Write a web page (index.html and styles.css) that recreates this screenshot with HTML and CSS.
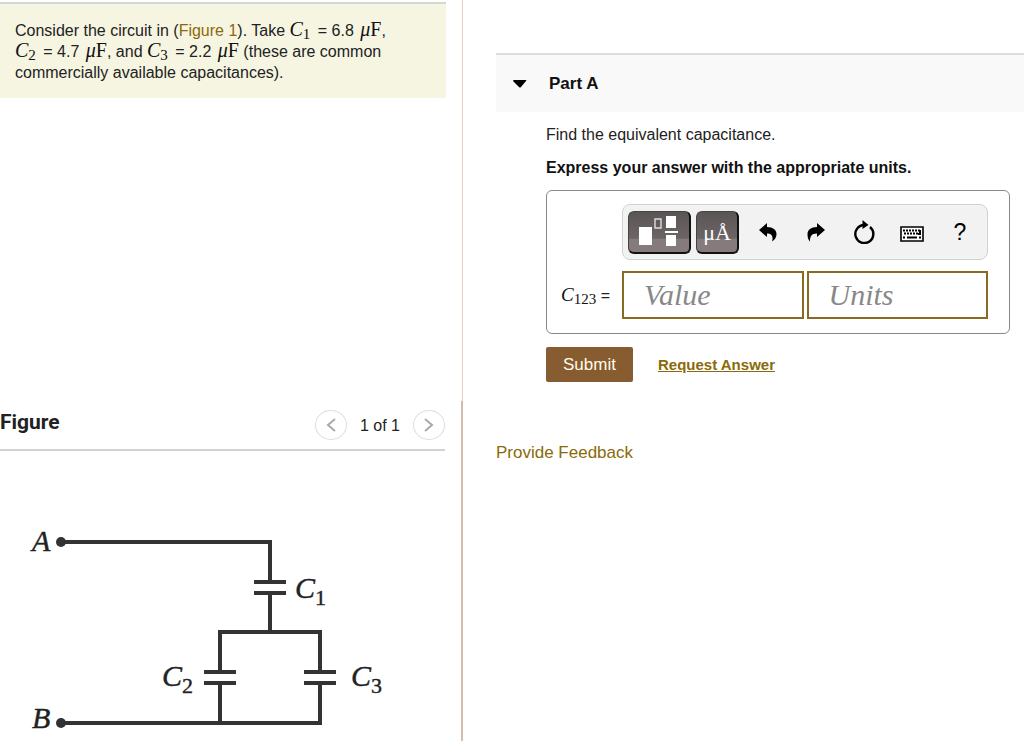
FILE: index.html
```
<!doctype html>
<html lang="en">
<head>
    <meta charset="UTF-8">
    <title>Equivalent capacitance</title>
    <link rel="stylesheet" href="styles.css">
</head>
<body>
    <div class="page">
        <div class="left">
            <div class="intro">
                <p class="problem">Consider the circuit in (<a href="#figure">Figure 1</a>). Take <span class="math"><i>C</i><sub>1</sub></span> = 6.8 <span class="math unit"><i>μ</i>F</span>, <span class="math"><i>C</i><sub>2</sub></span> = 4.7 <span class="math unit"><i>μ</i>F</span>, and <span class="math"><i>C</i><sub>3</sub></span> = 2.2 <span class="math unit"><i>μ</i>F</span> (these are common commercially available capacitances).</p>
            </div>
            <div class="figure" id="figure">
                <div class="figure-head">
                    <h2>Figure</h2>
                    <div class="pager">
                        <button type="button" aria-label="Previous figure"><svg width="12" height="16" viewBox="0 0 12 16"><path d="M10 2L3 8l7 6"/></svg></button>
                        <span>1 of 1</span>
                        <button type="button" aria-label="Next figure"><svg width="12" height="16" viewBox="0 0 12 16"><path d="M2 2l7 6-7 6"/></svg></button>
                    </div>
                </div>
                <svg class="circuit" viewBox="0 0 445 290">
                    <!-- wires -->
                    <g class="wire">
                        <path d="M61 91H270V131"/>
                        <path d="M270 142V181"/>
                        <path d="M220 221V181H320V221"/>
                        <path d="M220 232V272"/>
                        <path d="M61 272H320V232"/>
                    </g>
                    <!-- capacitor plates -->
                    <path class="wire" d="M254 131h32M254 142h32M204 221h32M204 232h32M304 221h32M304 232h32"/>
                    <circle cx="61" cy="91" r="5"/>
                    <circle cx="61" cy="272" r="5"/>
                    <text x="32" y="100">A</text>
                    <text x="32" y="277">B</text>
                    <text x="295" y="147">C<tspan class="sub" dy="7">1</tspan></text>
                    <text x="162" y="235">C<tspan class="sub" dy="7">2</tspan></text>
                    <text x="351" y="235">C<tspan class="sub" dy="7">3</tspan></text>
                </svg>
            </div>
        </div>
        <div class="right">
            <div class="part-head">
                <svg width="14" height="8" viewBox="0 0 14 8"><path d="M0 1Q0 0 1 0H13Q14 0 13 1L8 7Q7 8 6 7Z"/></svg>
                <h2>Part A</h2>
            </div>
            <form class="part-body">
                <p>Find the equivalent capacitance.</p>
                <p class="bold">Express your answer with the appropriate units.</p>
                <div class="answer">
                    <div class="toolbar">
                        <button type="button" class="dark templates" aria-label="Templates">
                            <svg width="40" height="34" viewBox="0 0 40 34" fill="#fff">
                                <path d="M0 12h13v18H0zM27 1h10v12H27zM27 20h10v11H27zM26 16h13v2H26z"/>
                                <path d="M16 4h6v9h-6z" fill="none" stroke="#ddd" stroke-width="1.4"/>
                            </svg>
                        </button>
                        <button type="button" class="dark">μÅ</button>
                        <div class="tools">
                            <button type="button" aria-label="Undo"><svg width="20" height="20" viewBox="0 0 20 20"><path d="M1 8L9 1V5C15 5 18.500 8 18.500 12C18.500 15 17 18 14 19.500C15.500 15 14 11.500 9 11.500V15Z"/></svg></button>
                            <button type="button" aria-label="Redo"><svg width="20" height="20" viewBox="0 0 20 20"><path d="M19 8L11 1V5C5 5 1.500 8 1.500 12C1.500 15 2 18 4 19.500C4 15 5 11.500 11 11.500V15Z"/></svg></button>
                            <button type="button" aria-label="Reset"><svg width="22" height="24" viewBox="0 0 22 24"><path d="M17 7A9 9 0 1 1 11 5" fill="none" stroke="#000" stroke-width="2.400"/><path d="M9.500 0L15.500 5L9.500 9Z"/></svg></button>
                            <button type="button" aria-label="Keyboard"><svg width="26" height="20" viewBox="0 0 26 20"><path d="M2 5H24V19H2Z" fill="#fff" stroke="#000" stroke-width="1.600"/><path d="M4 8.500H22M5 11.500H20" fill="none" stroke="#000" stroke-width="2" stroke-dasharray="2 1"/><path d="M4 14.500h2v2H4zM8 14.500h10v2H8zM20 14.500h2v2h-2zM20 8h2v5h-3v-2h1z"/></svg></button>
                            <button type="button" class="help" aria-label="Help">?</button>
                        </div>
                    </div>
                    <label class="answer-label" for="value"><span class="math"><i>C</i><sub>123</sub></span> =</label>
                    <div class="fields">
                        <input type="text" id="value" placeholder="Value">
                        <input type="text" placeholder="Units" aria-label="Units">
                    </div>
                </div>
                <div class="actions">
                    <button type="submit">Submit</button>
                    <a href="#">Request Answer</a>
                </div>
            </form>
            <a class="feedback" href="#">Provide Feedback</a>
        </div>
    </div>
</body>
</html>
```

FILE: styles.css
```
* {
    margin: 0;
    padding: 0;
    box-sizing: border-box;
}
body{
    font: 16px/21px "Liberation Sans", Arial, sans-serif;
    color: #222;
    background: #fff;
}
a{
    color: #8a6a0a;
    text-decoration: none;
}
button{
    font-family: inherit;
    border: 0;
    cursor: pointer;
}
.page{
    display: grid;
    grid-template-columns: minmax(0, 463fr) minmax(0, 561fr);
    min-height: 100vh;
}

/* left column */
.left{
    display: flex;
    flex-direction: column;
}
.intro{
    flex: 1;
    padding: 2px 16px 0 0;
    border-right: 1px solid #e0cfc4;
}
.problem{
    padding: 16px 50px 15px 15px;
    border-top: 2px solid #d3d6d3;
    background: #f6f5e1;
}
.math{
    font-family: "Liberation Serif", "Times New Roman", serif;
    font-size: 19px;
    line-height: 16px;
    color: #111;
    white-space: nowrap;
}
.math sub{
    font-size: 15px;
    line-height: 0;
    vertical-align: -3px;
}
.problem .math{
    font-size: 20px;
}
.problem sub{
    margin-right: 3px;
}
.problem .unit{
    margin-left: 2px;
}
.figure{
    padding-right: 16px;
    border-right: 2px solid #d2bcab;
}
.figure-head{
    display: flex;
    justify-content: space-between;
    align-items: center;
    height: 50px;
    border-bottom: 2px solid #d2d2d2;
}
.figure-head h2{
    font: bold 21px/24px Roboto, sans-serif;
    padding-bottom: 7px;
}
.pager{
    display: flex;
    align-items: center;
    gap: 13px;
}
.pager button{
    display: flex;
    align-items: center;
    justify-content: center;
    width: 32px;
    height: 30px;
    border: 1px solid #ddd;
    border-radius: 50%;
    background: #fff;
}
.pager path{
    fill: none;
    stroke: #aaa;
    stroke-width: 2;
}
.circuit{
    display: block;
    width: 100%;
    fill: #333;
}
.circuit .wire{
    fill: none;
    stroke: #333;
    stroke-width: 4;
}
.circuit text{
    font: italic 30px "Liberation Serif", "Times New Roman", serif;
    fill: #222;
    stroke: #222;
    stroke-width: 0.4;
}
.circuit .sub{
    font-size: 22px;
    font-style: normal;
}

/* right column */
.right{
    padding: 53px 0 0 33px;
}
.part-head{
    display: flex;
    align-items: center;
    gap: 22px;
    height: 59px;
    padding-left: 17px;
    border-top: 2px solid #ddd;
    background: #f9f9f9;
}
.part-head h2{
    font-size: 17px;
    color: #111;
}
.part-body{
    padding: 12px 14px 0 50px;
}
.part-body p{
    margin-bottom: 12px;
}
.part-body .bold{
    font-weight: bold;
    color: #111;
}
.answer{
    display: grid;
    grid-template-columns: 61px minmax(0, 1fr);
    row-gap: 11px;
    align-items: center;
    padding: 13px 21px 14px 14px;
    border: 1px solid #888;
    border-radius: 6px;
}
.toolbar{
    grid-column: 2;
    display: flex;
    align-items: center;
    gap: 5px;
    height: 56px;
    padding: 0 3px 0 5px;
    border: 1px solid #d2d2d2;
    border-radius: 8px;
    background: #f2f2f2;
}
.toolbar .dark{
    width: 43px;
    height: 43px;
    border: 1px solid #444;
    border-right: 2px solid #111;
    border-bottom: 2px solid #111;
    border-radius: 6px;
    background: linear-gradient(#5b5555, #6c6565 66%, #857a7c 67%, #857a7c);
    color: #fff;
    font: 22px "Liberation Serif", "Times New Roman", serif;
    padding-top: 3px;
}
.toolbar .templates{
    display: flex;
    align-items: center;
    justify-content: center;
    width: 63px;
    padding: 0;
}
.tools{
    display: flex;
    flex: 1;
}
.tools button{
    display: flex;
    flex: 1;
    align-items: center;
    justify-content: center;
    height: 43px;
    background: none;
}
.tools .help{
    font-size: 23px;
}
.answer-label{
    white-space: nowrap;
}
.fields{
    display: flex;
    gap: 3px;
}
.fields input{
    flex: 1;
    min-width: 0;
    height: 48px;
    padding: 0 20px;
    border: 2px solid #896a22;
    background: #fff;
    font: italic 30px "Liberation Serif", "Times New Roman", serif;
}
.fields input::placeholder{
    color: #888;
}
.actions{
    display: flex;
    align-items: center;
    gap: 25px;
    margin-top: 13px;
}
.actions button{
    width: 87px;
    height: 35px;
    border-radius: 2px;
    background: #875c31;
    color: #fffbe8;
    font-size: 17px;
}
.actions a{
    font-size: 15px;
    font-weight: bold;
    text-decoration: underline;
}
.feedback{
    display: inline-block;
    margin-top: 60px;
    font-size: 17px;
}
```
